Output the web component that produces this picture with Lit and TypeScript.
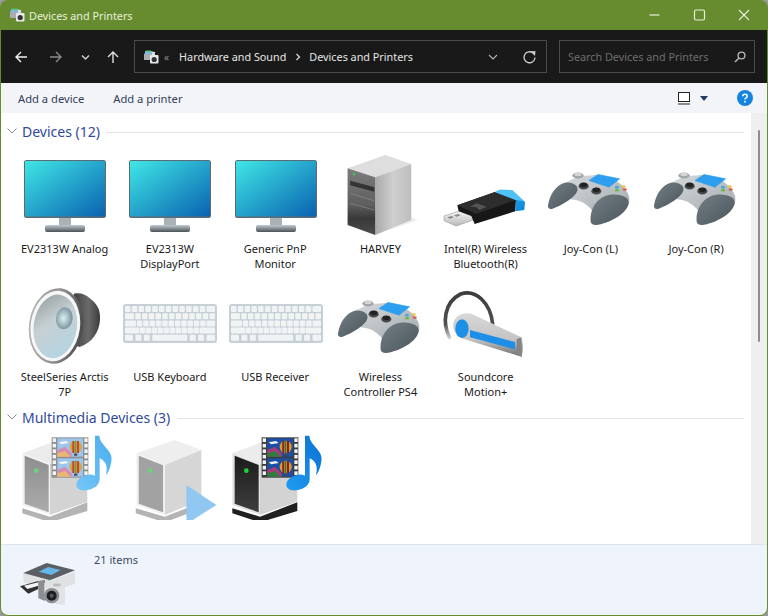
import { LitElement, html, svg, css } from 'lit';
import { customElement } from 'lit/decorators.js';

// all big icons are drawn in a 105x92 box; art was traced at 3x, hence the scale(.3333)
const screenFill = svg`<linearGradient id="scr" x1="0" y1="0" x2="1" y2="1"><stop offset="0" stop-color="#3fe6e6"/><stop offset="1" stop-color="#0a62b0"/></linearGradient>`;

const monitor = svg`
  <defs>${screenFill}
    <linearGradient id="base" x1="0" y1="0" x2="0" y2="1"><stop offset="0" stop-color="#c3ccd0"/><stop offset="1" stop-color="#4a5257"/></linearGradient>
  </defs>
  <rect x="47" y="67" width="12" height="10" fill="#a9b2b6"/>
  <rect x="33" y="75" width="40" height="7" rx="2" fill="url(#base)"/>
  <rect x="12" y="10" width="82" height="58" rx="2.5" fill="#5f6b72"/>
  <rect x="13" y="11" width="80" height="55.5" rx="1" fill="url(#scr)"/>`;

const harvey = svg`
  <g transform="translate(2.25 -10) scale(.3333)">
    <defs>
      <linearGradient id="hvSide" x1="0" y1="0" x2="1" y2="0"><stop offset="0" stop-color="#aaaaaa"/><stop offset=".5" stop-color="#cfcfcf"/><stop offset="1" stop-color="#bdbdbd"/></linearGradient>
      <linearGradient id="hvFront" x1="0" y1="0" x2="0" y2="1"><stop offset="0" stop-color="#7d7d7d"/><stop offset=".55" stop-color="#5e5e5e"/><stop offset=".75" stop-color="#383838"/><stop offset="1" stop-color="#4c4c4c"/></linearGradient>
    </defs>
    <path d="M135 284 L262 240 L243 232 L135 270Z" fill="#ececec"/>
    <path d="M52 85 L165 45 L243 72 L135 112Z" fill="#dedede"/>
    <path d="M135 112 L243 72 L243 240 L135 285Z" fill="url(#hvSide)"/>
    <path d="M52 85 L135 112 L135 285 L52 255Z" fill="url(#hvFront)"/>
    <path d="M60 122 L132 142 L132 155 L60 136Z" fill="#333"/>
    <path d="M60 160 L132 182 M60 190 L132 210" stroke="#8c8c8c" stroke-width="2"/>
    <circle cx="71" cy="102" r="4" fill="#35d04a"/>
  </g>`;

const dongle = svg`
  <g transform="translate(-103 -10) scale(.3333)">
    <defs>
      <linearGradient id="dgBlue" x1="0" y1="0" x2="1" y2="1"><stop offset="0" stop-color="#38b6f4"/><stop offset="1" stop-color="#0a84d8"/></linearGradient>
      <linearGradient id="dgMetal" x1="0" y1="0" x2="0" y2="1"><stop offset="0" stop-color="#fafafa"/><stop offset="1" stop-color="#b8b8b8"/></linearGradient>
    </defs>
    <path d="M342 228 L396 210 L432 228 L430 240 L378 258 L342 242Z" fill="url(#dgMetal)" stroke="#8a8a8a" stroke-width="1.5"/>
    <path d="M352 232 L364 228 L372 232 L360 236Z M372 226 L384 222 L392 226 L380 230Z" fill="#8a8a8a"/>
    <path d="M382 196 L495 156 L558 180 L556 214 L434 252 L424 228 L386 214Z" fill="#171717"/>
    <path d="M382 196 L495 156 L558 180 L438 222Z" fill="#2d2d2d"/>
    <path d="M420 200 L440 190 L470 200 L448 210 L440 202Z" fill="#555"/>
    <path d="M495 156 L510 149 L546 150 L585 186 L583 210 L556 214 L558 180Z" fill="url(#dgBlue)"/>
    <path d="M495 156 L510 149 L546 150 L582 184 L558 180Z" fill="#4fc3f7"/>
  </g>`;

const gamepad = svg`
  <g transform="translate(10 21.5) scale(.3333)">
    <defs>
      <linearGradient id="gpBody" x1="0" y1="0" x2="1" y2="1"><stop offset="0" stop-color="#d6dadd"/><stop offset="1" stop-color="#a4a9ad"/></linearGradient>
      <linearGradient id="gpGrip" x1="0" y1="0" x2="1" y2="1"><stop offset="0" stop-color="#737e84"/><stop offset="1" stop-color="#4b565c"/></linearGradient>
    </defs>
    <path d="M36 48 C64 22 96 10 130 12 C172 6 214 24 238 62 C248 80 246 98 232 112 L140 130 C128 104 100 84 70 84Z" fill="url(#gpBody)"/>
    <path d="M0 102 C4 72 24 40 50 34 C74 30 92 42 88 58 C82 78 44 100 14 112 C4 115 -1 110 0 102Z" fill="url(#gpGrip)"/>
    <path d="M128 150 C124 116 146 76 186 70 C220 66 244 78 242 96 C236 124 196 150 150 160 C136 162 129 158 128 150Z" fill="url(#gpGrip)"/>
    <ellipse cx="90" cy="12" rx="17" ry="9" fill="#a0a5a9"/>
    <ellipse cx="90" cy="9" rx="11" ry="5" fill="#d4d7d9"/>
    <path d="M123 27 L150 9 L215 22 L183 47Z" fill="#2e9ff0" stroke="#2e9ff0" stroke-width="2" stroke-linejoin="round"/>
    <ellipse cx="107" cy="44" rx="15" ry="10" fill="#45484b"/>
    <ellipse cx="107" cy="40" rx="11" ry="7" fill="#222"/>
    <ellipse cx="145" cy="59" rx="15" ry="10" fill="#45484b"/>
    <ellipse cx="145" cy="55" rx="11" ry="7" fill="#222"/>
    <ellipse cx="207" cy="47" rx="6" ry="4" fill="#4aa5dc"/>
    <ellipse cx="227" cy="45" rx="6" ry="4" fill="#e7c63c"/>
    <ellipse cx="207" cy="56" rx="6" ry="4" fill="#6cb84a"/>
    <ellipse cx="230" cy="54" rx="6" ry="4" fill="#dd5a4e"/>
  </g>`;

const speaker = svg`
  <g transform="translate(-12 -3) scale(.3333)">
    <defs>
      <linearGradient id="spBack" x1="0" y1="0" x2="1" y2="0"><stop offset="0" stop-color="#2f2f2f"/><stop offset=".65" stop-color="#6a6a6a"/><stop offset="1" stop-color="#3c3c3c"/></linearGradient>
      <linearGradient id="spCone" x1="0" y1="0" x2=".6" y2="1"><stop offset="0" stop-color="#8f9a9d"/><stop offset=".5" stop-color="#c6d0d2"/><stop offset="1" stop-color="#b5d3e2"/></linearGradient>
      <linearGradient id="spRim" x1="0" y1="0" x2="1" y2="0"><stop offset="0" stop-color="#b4b4b4"/><stop offset=".55" stop-color="#8e8e8e"/><stop offset="1" stop-color="#4a4a4a"/></linearGradient>
      <radialGradient id="spDome" cx=".45" cy=".5"><stop offset="0" stop-color="#dcf1f3"/><stop offset="1" stop-color="#7f98a2"/></radialGradient>
    </defs>
    <path d="M222 56 C240 52 258 58 272 72 C296 90 302 112 300 135 C298 170 276 205 238 216 L200 200Z" fill="url(#spBack)"/>
    <ellipse cx="168" cy="153" rx="81" ry="114" transform="rotate(8 168 153)" fill="url(#spRim)"/>
    <ellipse cx="166" cy="153" rx="74" ry="106" transform="rotate(8 166 153)" fill="#f7f7f7"/>
    <ellipse cx="166" cy="154" rx="65" ry="96" transform="rotate(8 166 154)" fill="url(#spCone)"/>
    <ellipse cx="193" cy="130" rx="25" ry="33" transform="rotate(8 193 130)" fill="url(#spDome)"/>
  </g>`;

// key widths per row, traced off the 94px wide keyboard
const keyRows = [
  [5.5, 5.5, 5.5, 5.5, 5.5, 5.5, 5.5, 5.5, 5.5, 5.5, 5.5, 5.5, 8.5],
  [9, 5.5, 5.5, 5.5, 5.5, 5.5, 5.5, 5.5, 5.5, 5.5, 5.5, 5.5, 5.5],
  [11, 5.5, 5.5, 5.5, 5.5, 5.5, 5.5, 5.5, 5.5, 5.5, 5.5, 5.5, 8.5],
  [14, 5.5, 5.5, 5.5, 5.5, 5.5, 5.5, 5.5, 5.5, 5.5, 5.5, 15.5],
  [8, 6, 6, 35, 6, 6, 8.5],
];

const keyboard = svg`
  <rect x="6" y="26" width="94" height="39" rx="3" fill="#c7d0d6"/>
  ${keyRows.map((row, r) => {
    let x = 8;
    const total = row.reduce((a, b) => a + b, 0);
    const gap = (90 - total) / (row.length - 1);
    return row.map((w) => {
      const k = svg`<rect x=${x} y=${28 + r * 7.2} width=${w} height="6" rx="1" fill="#f1f4f5"/>`;
      x += w + gap;
      return k;
    });
  })}`;

const headset = svg`
  <g transform="translate(-103 2) scale(.3333)">
    <defs>
      <linearGradient id="hsBody" x1="0" y1="0" x2="0" y2="1"><stop offset="0" stop-color="#d8d8d8"/><stop offset=".6" stop-color="#c4c4c4"/><stop offset="1" stop-color="#6f6f6f"/></linearGradient>
      <linearGradient id="hsHook" x1="0" y1="1" x2="0" y2="0"><stop offset="0" stop-color="#c9c9c9"/><stop offset=".3" stop-color="#4e4e4e"/><stop offset="1" stop-color="#3d3d3d"/></linearGradient>
    </defs>
    <path d="M358 172 C338 130 340 68 392 42 C438 26 482 70 488 132" fill="none" stroke="url(#hsHook)" stroke-width="11" stroke-linecap="round"/>
    <path d="M370 130 C376 104 408 92 434 106 L574 172 C581 195 579 215 574 230 L400 176 C382 170 368 156 370 130Z" fill="url(#hsBody)"/>
    <path d="M420 150 L555 186 L555 208 L420 172Z" fill="#1e8fe6"/>
    <ellipse cx="396" cy="146" rx="20" ry="28" fill="#1e8fe6"/>
    <path d="M574 172 L576 230 L560 224 L560 178Z" fill="#858585"/>
  </g>`;

// one picture of the film strip: hills on the left, a striped balloon on the right
const frame = (y: number, dark: boolean) => svg`
  <rect x="172" y=${y} width="77" height="55" fill=${dark ? '#1c50a8' : '#9cc6ee'}/>
  <path d=${`M172 ${y + 35} L195 ${y + 25} L215 ${y + 45} V${y + 55} H172Z`} fill=${dark ? '#a83a7a' : '#d98ab0'}/>
  <path d=${`M172 ${y + 45} L195 ${y + 38} L212 ${y + 55} H172Z`} fill=${dark ? '#2e7d3a' : '#e8b870'}/>
  <path d=${`M176 ${y + 12} L198 ${y + 8} L206 ${y + 14} L184 ${y + 18}Z`} fill="#f3f3e6"/>
  <ellipse cx="227" cy=${y + 26} rx="18" ry="19" fill=${dark ? '#d69a2a' : '#dca13a'}/>
  <path d=${`M220 ${y + 8} V${y + 44} M234 ${y + 8} V${y + 44}`} stroke=${dark ? '#8a1f1f' : '#bb4a3a'} stroke-width="6"/>
  <path d=${`M227 ${y + 7} V${y + 45}`} stroke=${dark ? '#2e7d3a' : '#5ea548'} stroke-width="4"/>
  <rect x="222" y=${y + 46} width="10" height="6" fill="#444"/>`;

const filmStrip = (dark: boolean) => svg`
  <rect x="155" y="97" width="110" height="121" fill=${dark ? '#3c3c3c' : '#8e8e8e'}/>
  ${[0, 1, 2, 3, 4, 5, 6].map(
    (i) => svg`<rect x="158" y=${100 + i * 16.5} width="10" height="11" fill="#f3f3f3"/><rect x="253" y=${100 + i * 16.5} width="10" height="11" fill="#f3f3f3"/>`
  )}
  ${frame(100, dark)}${frame(160, dark)}`;

const note = (id: string, a: string, b: string) => svg`
  <defs><linearGradient id=${id} x1="0" y1="1" x2="1" y2="0"><stop offset="0" stop-color=${a}/><stop offset="1" stop-color=${b}/></linearGradient></defs>
  <path d="M285 92 L298 92 C300 125 345 135 333 175 C330 192 324 205 318 210 C325 180 315 168 299 160 L299 225 C296 248 268 258 245 256 C225 252 224 232 240 220 C255 208 272 206 285 212Z" fill=${'url(#' + id + ')'}/>`;

const mediaServer = (dark: boolean, id: string) => svg`
  <defs>
    <linearGradient id=${id + 'P'} x1="0" y1="0" x2="0" y2="1">
      <stop offset="0" stop-color=${dark ? '#1c1c1c' : '#8e8e8e'}/><stop offset="1" stop-color=${dark ? '#3e3e3e' : '#ababab'}/>
    </linearGradient>
  </defs>
  <path d="M67 310 L150 335 L262 292 L262 318 L150 352 L67 325Z" fill=${dark ? '#1f1f1f' : '#b4b4b4'}/>
  <path d="M67 145 L165 108 L262 135 L150 178Z" fill="#ececec"/>
  <path d="M150 178 L262 135 L262 290 L150 330Z" fill="#d3d3d3"/>
  <path d="M67 145 L150 178 L150 330 L67 300Z" fill=${dark ? '#e2e2e2' : '#f1f1f1'}/>
  <path d="M74 152 L146 180 L146 322 L74 296Z" fill=${'url(#' + id + 'P)'}/>
  <circle cx="109" cy="197" r="7" fill=${dark ? '#1fd13a' : '#6bd47a'}/>`;

const media1 = svg`
  <g transform="translate(-12 -23) scale(.3333)">
    ${mediaServer(false, 'm1')}${filmStrip(false)}${note('n1', '#76c6f7', '#49aeef')}
  </g>`;

const media2 = svg`
  <g transform="translate(-117.25 -23) scale(.3333)">
    <path d="M408 310 L495 335 L585 300 L585 318 L495 352 L408 325Z" fill="#b4b4b4"/>
    <path d="M410 145 L525 105 L605 135 L495 180Z" fill="#eeeeee"/>
    <path d="M495 180 L605 135 L605 285 L495 330Z" fill="#d6d6d6"/>
    <path d="M410 145 L495 180 L495 330 L410 300Z" fill="#f1f1f1"/>
    <path d="M417 152 L490 181 L490 322 L417 296Z" fill="#a2a2a2"/>
    <circle cx="451" cy="197" r="7" fill="#6bd47a"/>
    <path d="M560 240 L650 300 L560 357Z" fill="#90c8f1"/>
  </g>`;

const media3 = svg`
  <g transform="translate(-13 -23) scale(.3333)">
    ${mediaServer(true, 'm3')}${filmStrip(true)}${note('n3', '#1f9cf0', '#0b71d2')}
  </g>`;

// the icon used in the title bar and the address bar
const deviceSmall = html`
  <svg class="tiny" viewBox="0 0 16 14">
    <path d="M1 4 L6 1 L12 2 V6 L1 8Z" fill="#d8dde0"/>
    <path d="M2 1 H9 V4 H2Z" fill="#7fb6e6"/>
    <path d="M3 0.5 H8 V2 H3Z" fill="#58c36a"/>
    <rect x="1" y="4" width="8" height="6" fill="#a8adb0"/>
    <rect x="7" y="5" width="8.5" height="8.5" rx="1" fill="#e8e8e8"/>
    <circle cx="11.2" cy="9.5" r="2.6" fill="#2f3336"/>
  </svg>`;

const detailsIcon = html`
  <svg class="details-icon" viewBox="0 0 60 60">
    <g transform="scale(.3333) translate(-60 -424)">
      <path d="M70 508 L150 532 L225 504 L225 540 L160 562 L70 536Z" fill="#dfe1e3"/>
      <path d="M70 508 L140 478 L225 500 L150 530Z" fill="#5b5f63"/>
      <path d="M116 504 L144 490 L182 499 L154 514Z" fill="#66b6ea"/>
      <circle cx="148" cy="529" r="2.5" fill="#46c653"/>
      <path d="M60 548 L115 532 L115 556 L85 570Z" fill="#2f3133"/>
      <path d="M72 546 L115 536 L115 546 L82 556Z" fill="#f5f5f5"/>
      <path d="M115 532 L135 528 L135 592 L115 584Z" fill="#8c8f91"/>
      <path d="M133 538 L190 548 Q195 549 195 555 L195 605 L140 596 L133 582Z" fill="#e2e3e4"/>
      <rect x="160" y="540" width="22" height="8" fill="#b9bbbd"/>
      <circle cx="155" cy="576" r="23" fill="#8c8f91"/>
      <circle cx="155" cy="576" r="15" fill="#1e1e1e"/>
      <circle cx="155" cy="576" r="6" fill="#5a5a5a"/>
    </g>
  </svg>`;

type Device = { name: string; art: unknown };

const devices: Device[] = [
  { name: 'EV2313W Analog', art: monitor },
  { name: 'EV2313W DisplayPort', art: monitor },
  { name: 'Generic PnP Monitor', art: monitor },
  { name: 'HARVEY', art: harvey },
  { name: 'Intel(R) Wireless Bluetooth(R)', art: dongle },
  { name: 'Joy-Con (L)', art: gamepad },
  { name: 'Joy-Con (R)', art: gamepad },
  { name: 'SteelSeries Arctis 7P', art: speaker },
  { name: 'USB Keyboard', art: keyboard },
  { name: 'USB Receiver', art: keyboard },
  { name: 'Wireless Controller PS4', art: gamepad },
  { name: 'Soundcore Motion+', art: headset },
];

@customElement('app-root')
export class AppRoot extends LitElement {
  static styles = css`
    :host {
      display: block;
      width: 768px;
      height: 616px;
      background: #9a9a9a;
      font-family: "Noto Sans", "Liberation Sans", sans-serif;
      font-size: 11px;
      color: #1a1a1a;
    }
    .window {
      height: 616px;
      box-sizing: border-box;
      display: flex;
      flex-direction: column;
      border-radius: 8px;
      overflow: hidden;
      background: #678b2f;
      padding: 0 1px 1px;
    }
    .title {
      height: 30px;
      flex: none;
      display: flex;
      align-items: center;
      color: #e8f0da;
      font-size: 10.8px;
      padding-left: 8px;
      gap: 4px;
    }
    .title .text { flex: 1; }
    .tiny { width: 16px; height: 14px; flex: none; }
    .caption { display: flex; }
    .caption svg { width: 45px; height: 30px; display: block; }
    .nav {
      height: 53px;
      flex: none;
      background: #191919;
      display: flex;
      align-items: center;
      color: #e6e6e6;
      font-size: 10.8px;
    }
    .navbtns { width: 133px; flex: none; display: flex; align-items: center; }
    .navbtns svg { display: block; }
    .address {
      width: 413px;
      height: 33px;
      margin-right: 12px;
      box-sizing: border-box;
      border: 1px solid #4a4a4a;
      display: flex;
      align-items: center;
      padding-left: 8px;
      gap: 5px;
    }
    .crumbs { flex: 1; display: flex; align-items: center; gap: 8.5px; margin-left: 5px; }
    .muted { color: #8c8c8c; font-size: 10px; }
    .search {
      width: 196px;
      height: 33px;
      box-sizing: border-box;
      border: 1px solid #4a4a4a;
      display: flex;
      align-items: center;
      justify-content: space-between;
      padding: 0 8px;
      color: #6e6e6e;
    }
    .toolbar {
      height: 30px;
      flex: none;
      background: #f3f4f8;
      display: flex;
      align-items: center;
      padding-left: 17px;
      gap: 29px;
      color: #33405a;
      font-size: 11.2px;
    }
    .toolbar .spacer { flex: 1; }
    .tool-right { display: flex; align-items: center; padding-right: 14px; }
    .view-arrow { margin: 0 29px 0 9px; }
    .main { flex: 1; min-height: 0; display: flex; background: #fff; }
    .content { flex: 1; min-width: 0; padding: 8px 7px 0 6px; }
    .scroll { width: 16px; flex: none; background: #efefef; display: flex; justify-content: center; padding-top: 17px; box-sizing: border-box; }
    .thumb { width: 2px; height: 212px; background: #8d8d8d; border-radius: 1px; }
    .group { display: flex; align-items: center; gap: 5px; height: 20px; color: #2f4a9c; font-size: 14px; }
    .group svg { flex: none; }
    .group .rule { flex: 1; height: 1px; background: #e2e4e8; margin: 2px 0 0 2px; }
    .grid { display: grid; grid-template-columns: repeat(7, 105.25px); padding-left: 5px; margin: 9px 0 1px; }
    .cell { display: flex; flex-direction: column; align-items: center; height: 128px; }
    .cell svg { display: block; width: 105px; height: 92px; flex: none; }
    .cell .label { width: 92px; text-align: center; line-height: 14.5px; }
    .grid.media { margin: 1px 0 0; }
    .grid.media .cell { height: 116px; }
    .details {
      height: 70px;
      flex: none;
      border-top: 1px solid #dde3ee;
      background: #eff3fb;
      display: flex;
      color: #3c4a66;
      padding-left: 19px;
      border-radius: 0 0 7px 7px;
    }
    .details-icon { width: 60px; height: 60px; flex: none; }
    .details .count { margin: 7px 0 0 14px; }
  `;

  renderCell(d: { name: string; art: unknown }) {
    return html`<div class="cell">
      <svg viewBox="0 0 105 92">${d.art}</svg>
      <div class="label">${d.name}</div>
    </div>`;
  }

  render() {
    return html`
      <div class="window">
        <div class="title">
          ${deviceSmall}
          <span class="text">Devices and Printers</span>
          <div class="caption">
            <svg viewBox="0 0 45 30"><path d="M17.5 15 H27.5" stroke="#e8f0da" stroke-width="1.2"/></svg>
            <svg viewBox="0 0 45 30"><rect x="17.5" y="10" width="10" height="10" rx="1.5" fill="none" stroke="#e8f0da" stroke-width="1.2"/></svg>
            <svg viewBox="0 0 45 30"><path d="M17 10 L27 20 M27 10 L17 20" stroke="#e8f0da" stroke-width="1.1"/></svg>
          </div>
        </div>
        <div class="nav">
          <div class="navbtns">
            <svg width="133" height="24" viewBox="0 0 133 24">
              <path d="M26 12 H15 M20 7 L15 12 L20 17" fill="none" stroke="#f2f2f2" stroke-width="1.4"/>
              <path d="M49 12 H60 M55 7 L60 12 L55 17" fill="none" stroke="#8a8a8a" stroke-width="1.4"/>
              <path d="M81 10.5 L84.5 14 L88 10.5" fill="none" stroke="#d0d0d0" stroke-width="1.4"/>
              <path d="M112 18 V7 M107 12 L112 7 L117 12" fill="none" stroke="#e0e0e0" stroke-width="1.4"/>
            </svg>
          </div>
          <div class="address">
            ${deviceSmall}
            <span class="muted">«</span>
            <div class="crumbs">
              <span>Hardware and Sound</span>
              <svg width="6" height="8" viewBox="0 0 6 8"><path d="M1.5 1 L4.5 4 L1.5 7" fill="none" stroke="#ddd" stroke-width="1.2"/></svg>
              <span>Devices and Printers</span>
            </div>
            <svg width="12" height="12" viewBox="0 0 12 12"><path d="M2 4 L6 8 L10 4" fill="none" stroke="#b5b5b5" stroke-width="1.1"/></svg>
            <svg width="42" height="16" viewBox="0 0 42 16"><path d="M29 4 A5.5 5.5 0 1 0 31 8.5" fill="none" stroke="#cfcfcf" stroke-width="1.3"/><path d="M26.5 2.5 L31.5 2 L31 7Z" fill="#cfcfcf"/></svg>
          </div>
          <div class="search">
            <span>Search Devices and Printers</span>
            <svg width="12" height="12" viewBox="0 0 12 12"><circle cx="7.5" cy="4.5" r="3.4" fill="none" stroke="#b5b5b5" stroke-width="1.4"/><path d="M5 7 L1 11" stroke="#b5b5b5" stroke-width="1.6"/></svg>
          </div>
        </div>
        <div class="toolbar">
          <span>Add a device</span>
          <span>Add a printer</span>
          <span class="spacer"></span>
          <div class="tool-right">
            <svg width="14" height="14" viewBox="0 0 14 14"><rect x="1.5" y="1.5" width="11" height="9" fill="#fff" stroke="#222"/><path d="M1 13 H13" stroke="#222"/></svg>
            <svg class="view-arrow" width="8" height="5" viewBox="0 0 8 5"><path d="M0 0 H8 L4 5Z" fill="#1f3864"/></svg>
            <svg width="16" height="16" viewBox="0 0 16 16"><circle cx="8" cy="8" r="8" fill="#1584e0"/><path d="M5.8 6.2 C5.8 3.6 10.2 3.6 10.2 6.2 C10.2 8 8 7.8 8 9.6" fill="none" stroke="#fff" stroke-width="1.5"/><rect x="7.2" y="10.8" width="1.6" height="1.8" fill="#fff"/></svg>
          </div>
        </div>
        <div class="main">
          <div class="content">
            <div class="group">
              <svg width="10" height="6" viewBox="0 0 10 6"><path d="M0.5 0.5 L5 5 L9.5 0.5" fill="none" stroke="#8a8a8a"/></svg>
              <span>Devices (12)</span><span class="rule"></span>
            </div>
            <div class="grid">${devices.map((d) => this.renderCell(d))}</div>
            <div class="group">
              <svg width="10" height="6" viewBox="0 0 10 6"><path d="M0.5 0.5 L5 5 L9.5 0.5" fill="none" stroke="#8a8a8a"/></svg>
              <span>Multimedia Devices (3)</span><span class="rule"></span>
            </div>
            <div class="grid media">
              ${[media1, media2, media3].map((art) => html`<div class="cell"><svg viewBox="0 0 105 92">${art}</svg></div>`)}
            </div>
          </div>
          <div class="scroll"><div class="thumb"></div></div>
        </div>
        <div class="details">
          ${detailsIcon}
          <div class="count">21 items</div>
        </div>
      </div>
    `;
  }
}
